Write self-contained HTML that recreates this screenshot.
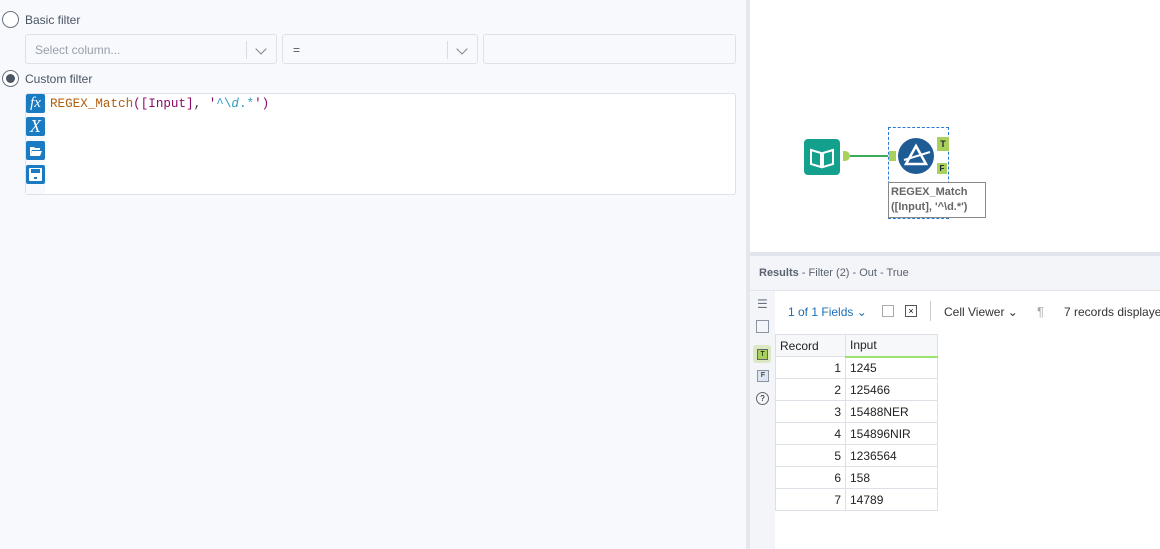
<!DOCTYPE html><html><head><style>
body{margin:0;width:1160px;height:549px;overflow:hidden;font-family:"Liberation Sans",sans-serif;font-size:12px;background:#fff;position:relative}
.a{position:absolute}
.box{border:1px solid #dde2ea;border-radius:3px;background:#f7f9fc;box-sizing:border-box}
.ib{position:absolute;left:26px;width:19px;height:19px;background:#1b7bc2;border-radius:2px;color:#fff;text-align:center;font-family:"Liberation Serif",serif;font-style:italic;font-size:15px;line-height:19px}
td{border:1px solid #dde0e6;height:22px;padding:0 4px;font-size:12px;color:#222;box-sizing:border-box}
.chev{position:absolute;top:10px;width:7px;height:7px;border-right:1.5px solid #7a8290;border-bottom:1.5px solid #7a8290;transform:rotate(45deg)}
</style></head><body>
<div class="a" style="left:0;top:0;width:746px;height:549px;background:#f7f9fc"></div>
<div class="a" style="left:746px;top:0;width:4px;height:549px;background:#e4e7ec"></div>
<div class="a" style="left:2px;top:11px;width:15px;height:15px;border:1px solid #6b7280;border-radius:50%;background:#fff"></div>
<div class="a" style="left:25px;top:13px;color:#4b5563">Basic filter</div>
<div class="a box" style="left:25px;top:34px;width:252px;height:30px"><span class="a" style="left:9px;top:8px;color:#9aa1ab">Select column...</span><span class="a" style="left:220px;top:6px;width:1px;height:18px;background:#d8dce3"></span><span class="chev" style="left:231px"></span></div>
<div class="a box" style="left:282px;top:34px;width:196px;height:30px"><span class="a" style="left:10px;top:8px;color:#4b5563">=</span><span class="a" style="left:164px;top:6px;width:1px;height:18px;background:#d8dce3"></span><span class="chev" style="left:175px"></span></div>
<div class="a box" style="left:483px;top:34px;width:253px;height:30px"></div>
<div class="a" style="left:2px;top:70px;width:15px;height:15px;border:1px solid #6b7280;border-radius:50%;background:#fff"><div style="margin:3px;width:9px;height:9px;border-radius:50%;background:#4b5563"></div></div>
<div class="a" style="left:25px;top:72px;color:#4b5563">Custom filter</div>
<div class="a" style="left:25px;top:93px;width:711px;height:102px;border:1px solid #dde2ea;border-radius:3px;background:#fff;box-sizing:border-box"></div>
<div class="a" style="left:26px;top:94px;width:19px;height:100px;background:#f7f9fc"></div>
<div class="ib" style="top:94px">fx</div>
<div class="ib" style="top:117px;font-size:18px">X</div>
<div class="ib" style="top:141px"><svg width="19" height="19"><path d="M4 6h4l1 1h5v2H6l-2 6z" fill="#fff"/><path d="M6 10h10l-2 5H4z" fill="#fff"/></svg></div>
<div class="ib" style="top:165px"><svg width="19" height="19"><rect x="3" y="3" width="13" height="13" rx="1" fill="#fff"/><rect x="5" y="4" width="9" height="4" fill="#1b7bc2"/><rect x="8" y="12" width="3" height="2" fill="#1b7bc2"/></svg></div>
<div class="a" style="left:50px;top:97px;font-family:'Liberation Mono',monospace;font-size:12.6px;color:#b35d0d">REGEX_Match<span style="color:#8a0a6a">([Input]</span><span style="color:#333">,</span> <span style="color:#8a0a6a">'</span><span style="color:#2a9dbd">^\<i>d</i>.*</span><span style="color:#8a0a6a">')</span></div>
<div class="a" style="left:804px;top:139px;width:36px;height:36px;background:#13a08c;border-radius:4px"><svg width="36" height="36"><path d="M7 11l10 3v14l-10-3zM29 11l-10 3v14l10-3z" fill="none" stroke="#fff" stroke-width="2"/><circle cx="23" cy="15" r="1.3" fill="#13a08c"/></svg></div>
<div class="a" style="left:843px;top:151px;width:7px;height:10px;background:#a7d15a;border-radius:0 5px 5px 0"></div>
<div class="a" style="left:850px;top:155px;width:38px;height:2px;background:#3bab5b"></div>
<div class="a" style="left:888px;top:127px;width:61px;height:92px;border:1px dashed #2a7ad3;box-sizing:border-box"></div>
<div class="a" style="left:889px;top:151px;width:7px;height:10px;background:#a7d15a"></div>
<div class="a" style="left:898px;top:138px;width:36px;height:36px;border-radius:50%;background:#1f5b94"><svg width="36" height="36"><path d="M18 8l10 18H8z" fill="none" stroke="#fff" stroke-width="2.5"/><path d="M6 22l26-8" stroke="#fff" stroke-width="2"/></svg></div>
<div class="a" style="left:937px;top:137px;width:12px;height:14px;background:#a7d15a;font-size:9px;font-weight:bold;text-align:center;line-height:14px;color:#223">T</div>
<div class="a" style="left:937px;top:163px;width:10px;height:11px;background:#a7d15a;font-size:8px;font-weight:bold;text-align:center;line-height:11px;color:#223">F</div>
<div class="a" style="left:888px;top:182px;width:98px;height:36px;border:1px solid #888;background:#fff;box-sizing:border-box;padding:2px 2px;font-size:11px;font-weight:bold;color:#666;line-height:15px">REGEX_Match<br>([Input], '^\d.*')</div>
<div class="a" style="left:750px;top:252px;width:410px;height:297px;background:#f3f5f9"></div>
<div class="a" style="left:750px;top:252px;width:410px;height:4px;background:#e2e6ec"></div>
<div class="a" style="left:759px;top:267px;font-size:11px;color:#5a6270"><b>Results</b> - Filter (2) - Out - True</div>
<div class="a" style="left:750px;top:290px;width:410px;height:1px;background:#e2e6ec"></div>
<div class="a" style="left:775px;top:291px;width:385px;height:258px;background:#fff"></div>
<div class="a" style="left:757px;top:297px;color:#6b7280;font-size:12px">☰</div>
<div class="a" style="left:756px;top:320px;width:11px;height:11px;border:1px solid #8a93a0;background:#f3f5f9"></div>
<div class="a" style="left:753px;top:345px;width:18px;height:18px;background:#dbe8c3;border-radius:3px"><div style="margin:4px;width:9px;height:9px;background:#a7d15a;border:1px solid #666;font-size:7px;text-align:center;line-height:9px">T</div></div>
<div class="a" style="left:757px;top:370px;width:10px;height:10px;border:1px solid #8a93a0;background:#dde6f3;font-size:7px;text-align:center;line-height:10px">F</div>
<div class="a" style="left:756px;top:392px;width:11px;height:11px;border:1px solid #666;border-radius:50%;font-size:8px;text-align:center;line-height:11px">?</div>
<div class="a" style="left:788px;top:305px;color:#1b6fb5">1 of 1 Fields &#8964;</div>
<div class="a" style="left:882px;top:305px;width:10px;height:10px;border:1px solid #aaa"></div>
<div class="a" style="left:905px;top:305px;width:10px;height:10px;border:1px solid #555;font-size:9px;line-height:10px;text-align:center">×</div>
<div class="a" style="left:930px;top:301px;width:1px;height:20px;background:#ccc"></div>
<div class="a" style="left:944px;top:305px;color:#333">Cell Viewer &#8964;</div>
<div class="a" style="left:1037px;top:304px;color:#aaa;font-size:13px">¶</div>
<div class="a" style="left:1064px;top:305px;color:#333;white-space:nowrap">7 records displayed</div>
<table class="a" style="left:775px;top:334px;border-collapse:collapse;width:163px;background:#fff">
<tr style="background:#f7f8fa"><td style="width:70px">Record</td><td style="border-bottom:2px solid #9be36d">Input</td></tr>
<tr><td align="right">1</td><td>1245</td></tr><tr><td align="right">2</td><td>125466</td></tr><tr><td align="right">3</td><td>15488NER</td></tr><tr><td align="right">4</td><td>154896NIR</td></tr><tr><td align="right">5</td><td>1236564</td></tr><tr><td align="right">6</td><td>158</td></tr><tr><td align="right">7</td><td>14789</td></tr>
</table>
</body></html>
